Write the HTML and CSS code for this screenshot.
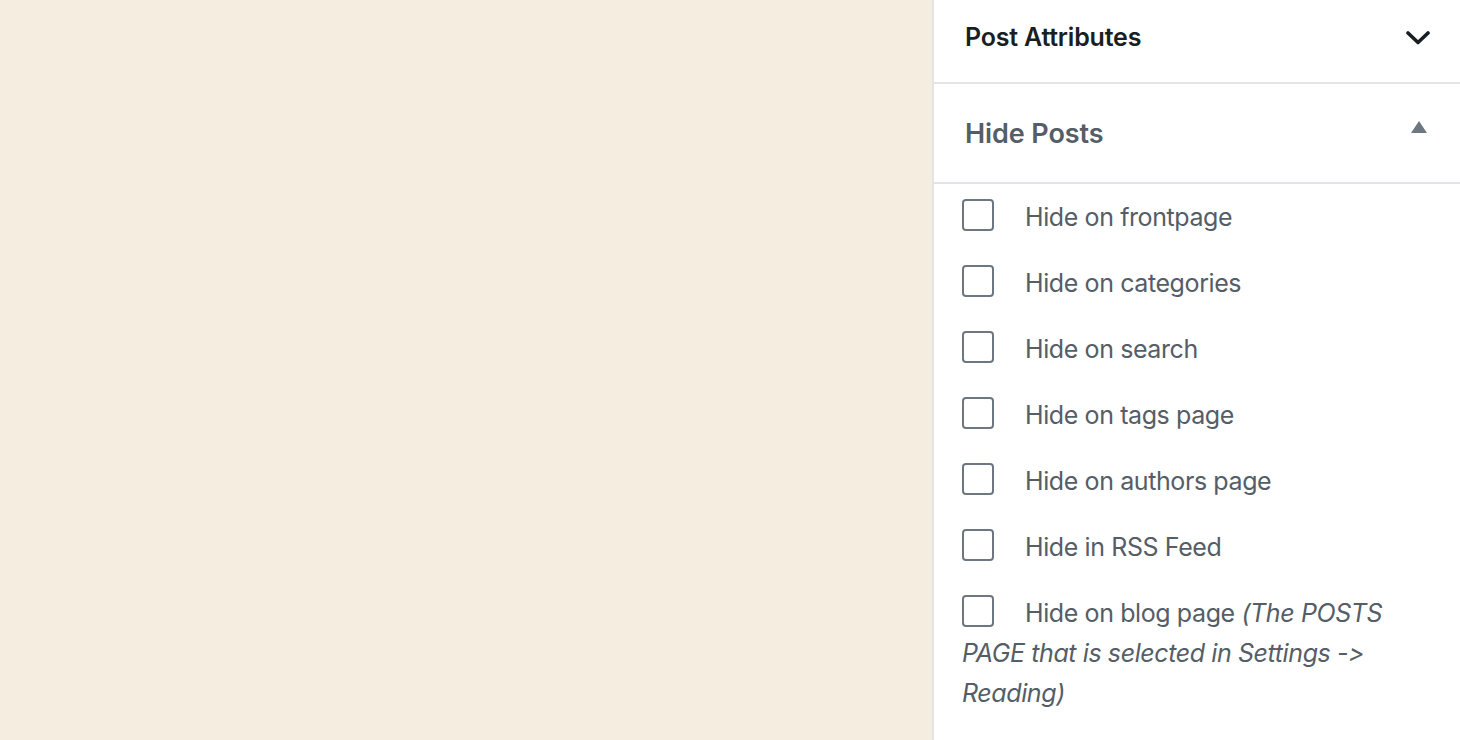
FILE: index.html
```html
<!DOCTYPE html>
<html>
<head>
<meta charset="utf-8">
<link rel="stylesheet" href="styles.css">
</head>
<body>
<div class="layout">
  <main class="canvas"></main>
  <aside class="sidebar">
    <section class="panel">
      <div class="panel-header">
        <h2 class="panel-title dark">Post Attributes</h2>
        <svg class="chevron" width="24" height="16" viewBox="0 0 24 16"><polyline points="2,3 12,12.5 22,3" fill="none" stroke="#191e23" stroke-width="3.6" stroke-linecap="round" stroke-linejoin="round"/></svg>
      </div>
    </section>
    <section class="panel open">
      <div class="panel-header tall">
        <h2 class="panel-title large">Hide Posts</h2>
        <svg class="triangle" width="16" height="12" viewBox="0 0 16 12"><polygon points="8,0 16,12 0,12" fill="#6c7781"/></svg>
      </div>
      <div class="panel-body">
        <label class="option"><span class="box"></span>Hide on frontpage</label>
        <label class="option"><span class="box"></span>Hide on categories</label>
        <label class="option"><span class="box"></span>Hide on search</label>
        <label class="option"><span class="box"></span>Hide on tags page</label>
        <label class="option"><span class="box"></span>Hide on authors page</label>
        <label class="option"><span class="box"></span>Hide in RSS Feed</label>
        <label class="option"><span class="box"></span>Hide on blog page <em>(The POSTS PAGE that is selected in Settings -&gt; Reading)</em></label>
      </div>
    </section>
  </aside>
</div>
</body>
</html>
```

FILE: styles.css
```css
html, body {
  margin: 0;
  padding: 0;
  height: 100%;
  overflow: hidden;
}
body {
  font-family: Inter, "Noto Sans", "Liberation Sans", sans-serif;
  background: #ffffff;
}
.layout {
  display: flex;
  height: 740px;
}
.canvas {
  flex: 1;
  background: #f5eee0;
}
.sidebar {
  width: 528px;
  flex: none;
  border-left: 2px solid #e2e4e7;
  background: #ffffff;
  box-sizing: border-box;
}
.panel {
  border-bottom: 2px solid #e2e4e7;
}
.panel.open {
  border-bottom: none;
}
.panel-header {
  height: 82px;
  display: flex;
  align-items: center;
  justify-content: space-between;
  padding: 0 30px 8px 31px;
  box-sizing: border-box;
}
.panel-header.tall {
  height: 100px;
  padding-bottom: 0;
  border-bottom: 2px solid #e2e4e7;
}
.panel-title {
  margin: 0;
  font-size: 25px;
  font-weight: 600;
  color: #555d66;
  letter-spacing: -0.2px;
}
.panel-title.large {
  font-size: 27px;
  letter-spacing: -0.1px;
  margin-top: 1px;
}
.panel-title.dark {
  color: #191e23;
}
.chevron {
  display: block;
  margin-top: 2px;
}
.triangle {
  display: block;
  margin-bottom: 12px;
  margin-right: 3px;
}
.panel-body {
  padding: 13px 32px 0 28px;
}
.option {
  display: block;
  font-size: 25px;
  line-height: 40px;
  color: #555d66;
  margin-bottom: 26px;
  letter-spacing: -0.4px;
}
.option em {
  font-style: italic;
}
.box {
  display: inline-block;
  width: 32px;
  height: 32px;
  box-sizing: border-box;
  border: 2px solid #6c7781;
  border-radius: 4px;
  vertical-align: -5px;
  margin-right: 31px;
  margin-top: -6px;
}
```
